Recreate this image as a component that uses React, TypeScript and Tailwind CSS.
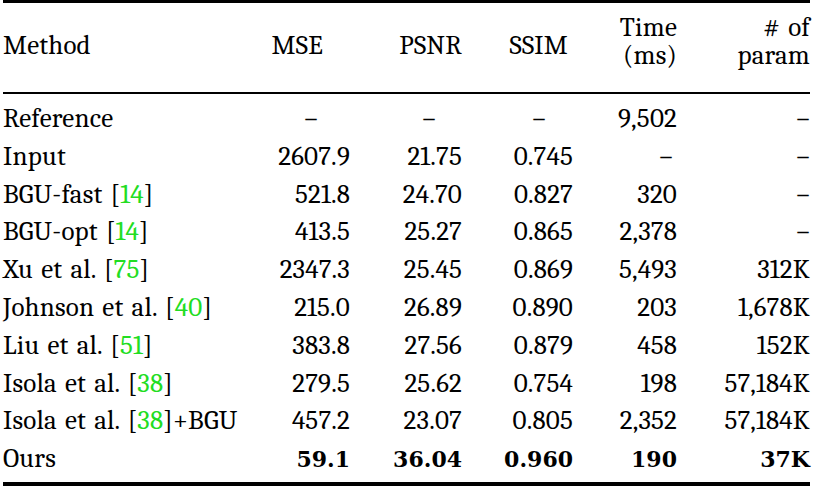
import type { ReactNode } from "react";

type Cell = string | { name: string; cite: string; suffix?: string };

const rows: Cell[][] = [
  ["Reference", "–", "–", "–", "9,502", "–"],
  ["Input", "2607.9", "21.75", "0.745", "–", "–"],
  [{ name: "BGU-fast", cite: "14" }, "521.8", "24.70", "0.827", "320", "–"],
  [{ name: "BGU-opt", cite: "14" }, "413.5", "25.27", "0.865", "2,378", "–"],
  [{ name: "Xu et al.", cite: "75" }, "2347.3", "25.45", "0.869", "5,493", "312K"],
  [{ name: "Johnson et al.", cite: "40" }, "215.0", "26.89", "0.890", "203", "1,678K"],
  [{ name: "Liu et al.", cite: "51" }, "383.8", "27.56", "0.879", "458", "152K"],
  [{ name: "Isola et al.", cite: "38" }, "279.5", "25.62", "0.754", "198", "57,184K"],
  [{ name: "Isola et al.", cite: "38", suffix: "+BGU" }, "457.2", "23.07", "0.805", "2,352", "57,184K"],
];

const ours = ["59.1", "36.04", "0.960", "190", "37K"];

// dashes sit in the middle of the value area for the first three metric columns
const dashPad = ["", "pr-[32px]", "pr-[26px]", "pr-[27px]", "pr-[4px]", ""];

const grid = "grid grid-cols-[259px_88px_112px_111px_104px_133px]";

function Method({ cell }: { cell: Cell }): ReactNode {
  if (typeof cell === "string") return cell;
  return (
    <>
      {cell.name} [<span className="text-[#22dd22]">{cell.cite}</span>]{cell.suffix}
    </>
  );
}

export default function App() {
  return (
    <div className="w-[814px] h-[488px] bg-white text-black font-serif [font-family:Liberation_Serif,Times_New_Roman,Times,serif] text-[27px] tracking-[0.2px] [word-spacing:2px]">
      <div className="ml-[3px] w-[807px]">
        <div className="h-[3px] bg-black" />

        <div className={`${grid} h-[89px] leading-[28px] items-start`}>
          <div className="pt-[29px]">Method</div>
          <div className="pt-[29px] pr-[27px] text-right">MSE</div>
          <div className="pt-[29px] text-right">PSNR</div>
          <div className="pt-[29px] pr-[5px] text-right">SSIM</div>
          <div className="pt-[11px] text-right">
            <div>Time</div>
            <div>(ms)</div>
          </div>
          <div className="pt-[11px] text-right">
            <div># of</div>
            <div>param</div>
          </div>
        </div>

        <div className="h-[1.5px] bg-black" />

        <div className="pt-[6.5px] pb-[4px]">
          {rows.map((r, i) => (
            <div key={i} className={`${grid} h-[37.8px] leading-[37.8px]`}>
              <div className="whitespace-nowrap">
                <Method cell={r[0]} />
              </div>
              {r.slice(1).map((v, j) => (
                <div key={j} className={`text-right whitespace-nowrap ${v === "–" ? dashPad[j + 1] : ""}`}>
                  {v as string}
                </div>
              ))}
            </div>
          ))}
          <div className={`${grid} h-[37.8px] leading-[37.8px] items-baseline`}>
            <div>Ours</div>
            {ours.map((v, j) => (
              <div key={j} className="text-right [font-family:DejaVu_Serif,serif] font-bold text-[22px] tracking-normal">
                {v}
              </div>
            ))}
          </div>
        </div>

        <div className="h-[4px] bg-black" />
      </div>
    </div>
  );
}
